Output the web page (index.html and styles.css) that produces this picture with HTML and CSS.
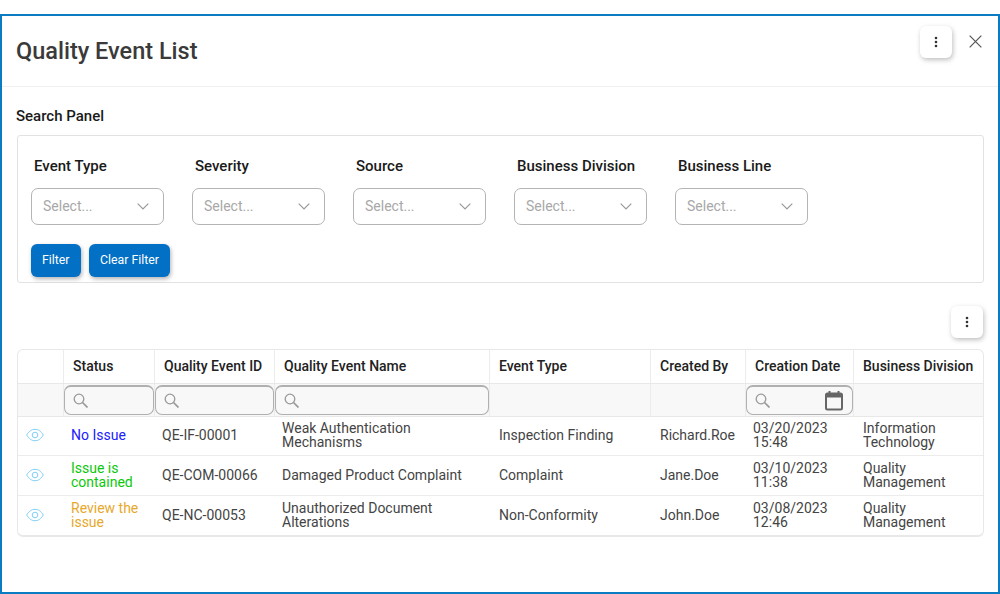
FILE: index.html
```html
<!DOCTYPE html>
<html lang="en">
<head>
<meta charset="utf-8">
<title>Quality Event List</title>
<link rel="stylesheet" href="styles.css">
</head>
<body>
<svg class="defs" width="0" height="0" aria-hidden="true">
  <symbol id="dots" viewBox="0 0 4 12"><circle cx="2" cy="2" r="1.3"/><circle cx="2" cy="6" r="1.3"/><circle cx="2" cy="10" r="1.3"/></symbol>
  <symbol id="chev" viewBox="0 0 12 7"><path d="M.7.700l5.300 5.300 5.300-5.300" fill="none" stroke="currentColor" stroke-width="1.200"/></symbol>
  <symbol id="search" viewBox="0 0 15 15"><circle cx="6" cy="6" r="4.800" fill="none" stroke="currentColor" stroke-width="1.300"/><path d="M9.500 9.500l5 5" fill="none" stroke="currentColor" stroke-width="1.700"/></symbol>
  <symbol id="eye" viewBox="0 0 18 14"><path d="M.7 7C3 3 5.800 1.300 9 1.300S15 3 17.300 7C15 11 12.200 12.700 9 12.700S3 11 .7 7z" fill="none" stroke="currentColor" stroke-width=".9"/><circle cx="9" cy="7" r="2.800" fill="none" stroke="currentColor" stroke-width=".9"/></symbol>
</svg>
<div class="frame">
  <header class="top">
    <h1>Quality Event List</h1>
    <div class="top-actions">
      <button class="menu" type="button" aria-label="Menu"><svg class="dots"><use href="#dots"/></svg></button>
      <svg class="close" viewBox="0 0 14 14"><path d="M.7.700l12.600 12.600M13.300.7L.7 13.300" fill="none" stroke="currentColor" stroke-width="1.300"/></svg>
    </div>
  </header>

  <section class="search">
    <h2>Search Panel</h2>
    <div class="panel">
      <div class="fields">
        <div class="field"><label>Event Type</label><div class="select"><span>Select...</span><svg class="chev"><use href="#chev"/></svg></div></div>
        <div class="field"><label>Severity</label><div class="select"><span>Select...</span><svg class="chev"><use href="#chev"/></svg></div></div>
        <div class="field"><label>Source</label><div class="select"><span>Select...</span><svg class="chev"><use href="#chev"/></svg></div></div>
        <div class="field"><label>Business Division</label><div class="select"><span>Select...</span><svg class="chev"><use href="#chev"/></svg></div></div>
        <div class="field"><label>Business Line</label><div class="select"><span>Select...</span><svg class="chev"><use href="#chev"/></svg></div></div>
      </div>
      <div class="buttons">
        <button class="btn" type="button">Filter</button>
        <button class="btn" type="button">Clear Filter</button>
      </div>
    </div>
  </section>

  <div class="table-tools">
    <button class="menu" type="button" aria-label="Menu"><svg class="dots"><use href="#dots"/></svg></button>
  </div>

  <div class="table">
    <div class="row head">
      <div class="cell"></div>
      <div class="cell">Status</div>
      <div class="cell">Quality Event ID</div>
      <div class="cell">Quality Event Name</div>
      <div class="cell">Event Type</div>
      <div class="cell">Created By</div>
      <div class="cell">Creation Date</div>
      <div class="cell">Business Division</div>
    </div>
    <div class="row filters">
      <div class="cell"></div>
      <div class="cell"><div class="input"><svg class="search-ic"><use href="#search"/></svg></div></div>
      <div class="cell"><div class="input"><svg class="search-ic"><use href="#search"/></svg></div></div>
      <div class="cell"><div class="input"><svg class="search-ic"><use href="#search"/></svg></div></div>
      <div class="cell"></div>
      <div class="cell"></div>
      <div class="cell"><div class="input"><svg class="search-ic"><use href="#search"/></svg>
        <svg class="cal" viewBox="0 0 18 20"><path d="M4.500 0v3M13.500 0v3" stroke="currentColor" stroke-width="2"/><rect x="1" y="2.500" width="16" height="16" rx="1.500" fill="none" stroke="currentColor" stroke-width="2"/><rect x="1" y="2.500" width="16" height="4" fill="currentColor"/></svg></div></div>
      <div class="cell"></div>
    </div>
    <div class="row body">
      <div class="cell eye-cell"><svg class="eye"><use href="#eye"/></svg></div>
      <div class="cell st-none">No Issue</div>
      <div class="cell">QE-IF-00001</div>
      <div class="cell">Weak Authentication Mechanisms</div>
      <div class="cell wide">Inspection Finding</div>
      <div class="cell wide">Richard.Roe</div>
      <div class="cell">03/20/2023 15:48</div>
      <div class="cell wide">Information Technology</div>
    </div>
    <div class="row body">
      <div class="cell eye-cell"><svg class="eye"><use href="#eye"/></svg></div>
      <div class="cell st-ok">Issue is contained</div>
      <div class="cell">QE-COM-00066</div>
      <div class="cell">Damaged Product Complaint</div>
      <div class="cell wide">Complaint</div>
      <div class="cell wide">Jane.Doe</div>
      <div class="cell">03/10/2023 11:38</div>
      <div class="cell wide">Quality Management</div>
    </div>
    <div class="row body">
      <div class="cell eye-cell"><svg class="eye"><use href="#eye"/></svg></div>
      <div class="cell st-review">Review the issue</div>
      <div class="cell">QE-NC-00053</div>
      <div class="cell">Unauthorized Document Alterations</div>
      <div class="cell wide">Non-Conformity</div>
      <div class="cell wide">John.Doe</div>
      <div class="cell">03/08/2023 12:46</div>
      <div class="cell wide">Quality Management</div>
    </div>
  </div>
</div>
</body>
</html>
```

FILE: styles.css
```css
* { box-sizing: border-box; }
html, body { margin: 0; height: 100%; background: #fff; }
body { padding-top: 14px; font-family: Roboto, "Liberation Sans", sans-serif; color: #444; overflow: hidden; }
.defs { display: block; height: 0; }
.frame { height: 580px; border: 2px solid #0a7cc4; background: #fff; }

.top { height: 71px; border-bottom: 1px solid #f0f0f0; display: flex; justify-content: space-between; padding: 10px 16px 0 14px; }
h1 { margin: 11px 0 0; font-size: 23.5px; line-height: 28px; font-weight: 500; color: #3a3a3a; }
.top-actions { display: flex; gap: 17px; align-items: flex-start; }
.menu { width: 32px; height: 32px; padding: 0; border: 0; border-radius: 6px; background: #fff; box-shadow: 1px 2px 5px rgba(0,0,0,.25); display: flex; align-items: center; justify-content: center; }
.dots { width: 4px; height: 12px; fill: #333; }
.close { width: 13px; height: 13px; margin-top: 9px; color: #555; }

.search { padding: 0 14px; }
h2 { margin: 21px 0 11px; font-size: 15px; line-height: 16px; font-weight: 500; color: #1a1a1a; }
.panel { height: 148px; margin-left: 1px; border: 1px solid #e2e2e2; border-radius: 3px; padding: 22px 0 0 13px; }
.fields { display: flex; gap: 28px; }
.field { width: 133px; }
.field label { display: block; margin: 0 0 13px 3px; font-size: 15px; line-height: 17px; font-weight: 500; color: #1a1a1a; }
.select { height: 37px; border: 1px solid #b4b4b4; border-radius: 7px; padding: 0 14px 1px 11px; display: flex; align-items: center; justify-content: space-between; font-size: 14px; color: #a8a8a8; }
.chev { width: 12px; height: 7px; color: #999; }
.buttons { display: flex; gap: 8.5px; margin-top: 19px; }
.btn { height: 33px; padding: 0 11px 1px; border: 0; border-radius: 6px; background: #0270c4; color: #fff; font: 400 12.3px Roboto, sans-serif; box-shadow: 1px 2px 4px rgba(0,0,0,.3); }

.table-tools { display: flex; justify-content: flex-end; padding: 23px 15px 11px 0; }

.table { margin: 0 14px 0 15px; border: 1px solid #e8e8e8; border-bottom-width: 2px; border-radius: 6px; }
.row { display: grid; grid-template-columns: 46px 91px 120px 215px 161px 95px 108px 129px; }
.cell { display: flex; align-items: center; padding: 0 7px; font-size: 14px; line-height: 14px; min-width: 0; }
.head { height: 34px; border-bottom: 1px solid #e8e8e8; }
.head .cell { padding: 0 0 2px 9px; font-weight: 500; color: #222; border-right: 1px solid #ececec; white-space: nowrap; }
.head .cell:last-child, .filters .cell:last-child { border-right: 0; }
.filters { height: 32.5px; background: #f8f8f8; border-bottom: 1px solid #e8e8e8; }
.filters .cell { padding: 1px 0 1.5px; border-right: 1px solid #ececec; }
.input { width: 100%; height: 30px; border: 1px solid #b0b0b0; border-top-width: 2px; border-radius: 7px; display: flex; align-items: center; justify-content: space-between; padding: 0 9px 0 8px; }
.search-ic { width: 15px; height: 15px; color: #999; }
.cal { width: 18px; height: 20px; color: #666; }
.body { height: 39.500px; border-bottom: 1px solid #ececec; color: #444; }
.body .cell { padding-bottom: 1px; }
.body:last-child { border-bottom: 0; }
.body .wide { padding-left: 9px; }
.body .eye-cell { padding-left: 8px; }
.eye { width: 18px; height: 14px; color: #6cc8f5; }
.st-none { color: #2020ff; }
.st-ok { color: #0cc80c; }
.st-review { color: #e8a82c; }
```
